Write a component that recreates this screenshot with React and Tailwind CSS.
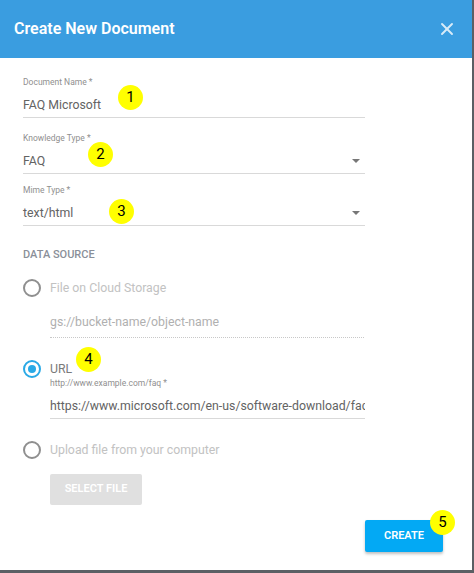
import { X } from 'lucide-react'

function Badge({ n, className }) {
    return (
        <div className={`absolute w-[25px] h-[25px] rounded-full bg-[#ffff00] flex items-center justify-center text-[15px] text-black ${className}`}>
            {n}
        </div>
    )
}

function Radio({ checked }) {
    return (
        <div className={`w-[18px] h-[18px] rounded-full border-2 flex items-center justify-center ${checked ? 'border-[#29a9e6]' : 'border-[#8f8f8f]'}`}>
            {checked && <div className="w-[8px] h-[8px] rounded-full bg-[#29a9e6]"></div>}
        </div>
    )
}

function Field({ label, value, select }) {
    return (
        <div className="w-[342px]">
            <div className="text-[8.5px] text-[#8f8f8f] leading-[12px]">{label}</div>
            <div className="flex items-center justify-between h-[25px] mt-[5px] border-b border-[#d9d9d9]">
                <span className="text-[12.3px] text-[#636363]">{value}</span>
                {select && (
                    <svg width="8" height="4" viewBox="0 0 8 4" className="mr-[5px]"><path d="M0 0h8L4 4z" fill="#777" /></svg>
                )}
            </div>
        </div>
    )
}

export default function App() {
    return (
        <div className="w-[474px] h-[573px] bg-[#5b5f64] relative" style={{ fontFamily: 'Roboto, "Liberation Sans", sans-serif' }}>
            <div className="w-[472px] h-[570px] bg-white">
                {/* Header */}
                <div className="h-[58px] bg-[#3a9de0] flex items-center justify-between pl-[14px] pr-[15px]">
                    <h1 className="text-[16px] font-semibold text-white">Create New Document</h1>
                    <X size={20} color="#ffffff" strokeWidth={2.3} className="opacity-80" />
                </div>

                <div className="pl-[23px] pt-[18px]">
                    <Field label="Document Name *" value="FAQ Microsoft" />
                    <div className="mt-[14px]"><Field label="Knowledge Type *" value="FAQ" select /></div>
                    <div className="mt-[10px]"><Field label="Mime Type *" value="text/html" select /></div>

                    <div className="mt-[21px] text-[11px] leading-[16px] font-medium text-[#8a8f99] uppercase">Data Source</div>

                    <div className="mt-[15px] h-[20px] flex items-center gap-[9px]">
                        <Radio />
                        <span className="text-[12.3px] text-[#c2c2c2]">File on Cloud Storage</span>
                    </div>
                    <div className="ml-[27px] mt-[14px] w-[314px] h-[26px] leading-[20px] border-b border-dotted border-[#c8c8c8] text-[12.3px] text-[#b0b0b0]">
                        gs://bucket-name/object-name
                    </div>

                    <div className="mt-[21px] h-[20px] flex items-center gap-[9px]">
                        <Radio checked />
                        <span className="text-[12.3px] text-[#7a7a7a]">URL</span>
                    </div>
                    <div className="ml-[27px] w-[315px]">
                        <div className="-mt-[1px] text-[8.5px] text-[#8f8f8f] leading-[11px]">http://www.example.com/faq *</div>
                        <div className="h-[23px] mt-[7px] leading-[20px] border-b border-[#d9d9d9] text-[12.3px] text-[#636363] whitespace-nowrap overflow-hidden">
                            https://www.microsoft.com/en-us/software-download/faq
                        </div>
                    </div>

                    <div className="mt-[21px] h-[20px] flex items-center gap-[9px]">
                        <Radio />
                        <span className="text-[12.3px] text-[#c2c2c2]">Upload file from your computer</span>
                    </div>
                    <button className="ml-[27px] mt-[14px] w-[92px] h-[31px] bg-[#e0e0e0] rounded-[2px] text-[11px] font-semibold text-white uppercase">
                        Select File
                    </button>
                </div>

                <div className="flex justify-end pr-[29px] mt-[15px]">
                    <button className="w-[78px] h-[32px] bg-[#03a9f4] rounded-[2px] text-[11px] font-semibold text-white uppercase shadow-[0_2px_3px_rgba(0,0,0,0.25)]">
                        Create
                    </button>
                </div>
            </div>

            <Badge n="1" className="left-[118px] top-[85px]" />
            <Badge n="2" className="left-[88px] top-[142px]" />
            <Badge n="3" className="left-[109px] top-[199px]" />
            <Badge n="4" className="left-[76px] top-[347px]" />
            <Badge n="5" className="left-[430px] top-[510px]" />
        </div>
    )
}
